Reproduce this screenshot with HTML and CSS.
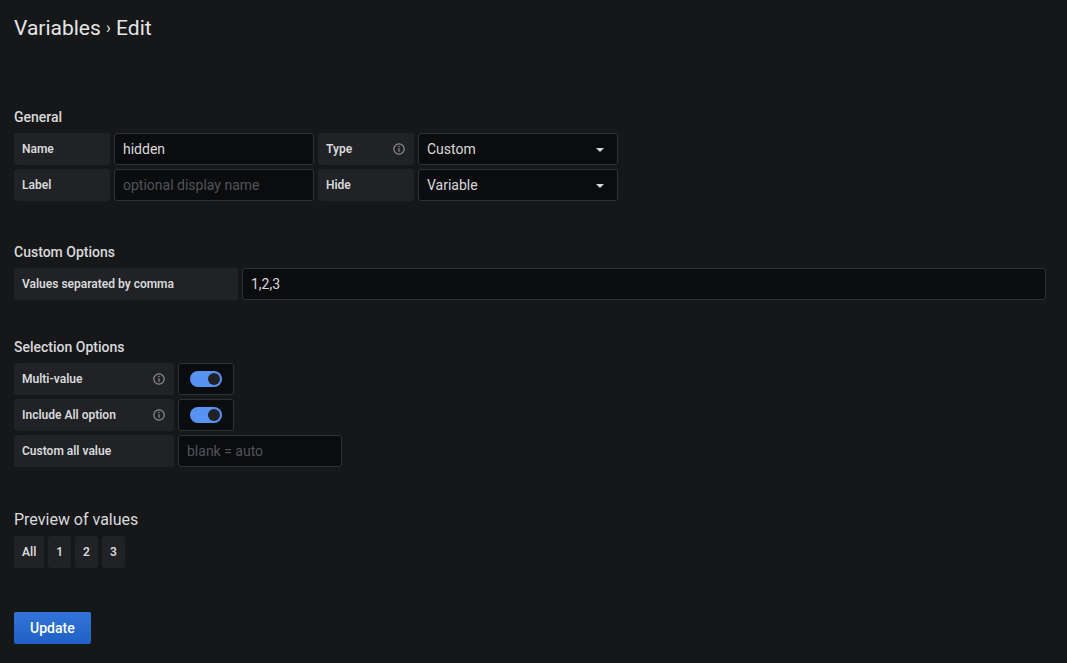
FILE: index.html
```html
<!DOCTYPE html>
<html>
<head>
<meta charset="utf-8">
<link rel="stylesheet" href="styles.css">
</head>
<body>
<div class="page">
  <h1 class="title">Variables <span class="sep">›</span> Edit</h1>

  <h5 class="heading h-general">General</h5>
  <div class="rows">
    <div class="row">
      <div class="label w96">Name</div>
      <div class="input w200">hidden</div>
      <div class="label w96 has-icon">Type
        <svg class="info" viewBox="0 0 12 12" width="12" height="12"><circle cx="6" cy="6" r="5.2" fill="none" stroke="currentColor" stroke-width="1.2"/><rect x="5.4" y="5.2" width="1.2" height="3.6" fill="currentColor"/><circle cx="6" cy="3.6" r="0.75" fill="currentColor"/></svg>
      </div>
      <div class="input w200 select">Custom<span class="caret"></span></div>
    </div>
    <div class="row">
      <div class="label w96">Label</div>
      <div class="input w200 placeholder">optional display name</div>
      <div class="label w96">Hide</div>
      <div class="input w200 select">Variable<span class="caret"></span></div>
    </div>
  </div>

  <h5 class="heading h-custom">Custom Options</h5>
  <div class="rows">
    <div class="row">
      <div class="label w224">Values separated by comma</div>
      <div class="input wide">1,2,3</div>
    </div>
  </div>

  <h5 class="heading h-sel">Selection Options</h5>
  <div class="rows">
    <div class="row">
      <div class="label w160 has-icon">Multi-value
        <svg class="info" viewBox="0 0 12 12" width="12" height="12"><circle cx="6" cy="6" r="5.2" fill="none" stroke="currentColor" stroke-width="1.2"/><rect x="5.4" y="5.2" width="1.2" height="3.6" fill="currentColor"/><circle cx="6" cy="3.6" r="0.75" fill="currentColor"/></svg>
      </div>
      <div class="switchbox"><span class="track"><span class="knob"></span></span></div>
    </div>
    <div class="row">
      <div class="label w160 has-icon">Include All option
        <svg class="info" viewBox="0 0 12 12" width="12" height="12"><circle cx="6" cy="6" r="5.2" fill="none" stroke="currentColor" stroke-width="1.2"/><rect x="5.4" y="5.2" width="1.2" height="3.6" fill="currentColor"/><circle cx="6" cy="3.6" r="0.75" fill="currentColor"/></svg>
      </div>
      <div class="switchbox"><span class="track"><span class="knob"></span></span></div>
    </div>
    <div class="row">
      <div class="label w160">Custom all value</div>
      <div class="input w164 placeholder">blank = auto</div>
    </div>
  </div>

  <h4 class="heading h-preview">Preview of values</h4>
  <div class="chips">
    <span class="chip">All</span>
    <span class="chip">1</span>
    <span class="chip">2</span>
    <span class="chip">3</span>
  </div>

  <button class="btn">Update</button>
</div>
</body>
</html>
```

FILE: styles.css
```css
html, body {
  margin: 0;
  padding: 0;
  background: #161719;
  height: 100%;
}
body {
  font-family: Roboto, "Liberation Sans", Arial, sans-serif;
  color: #d8d9da;
  font-size: 14px;
}
.page {
  padding: 12px 21px 0 14px;
}
.title {
  margin: 0;
  font-size: 21px;
  font-weight: 400;
  line-height: 32px;
  color: #e4e5e6;
}
.title .sep {
  font-size: 16px;
  position: relative;
  top: -2px;
}
.heading {
  margin: 0 0 6px 0;
  font-size: 14px;
  font-weight: 500;
  line-height: 20px;
  color: #d8d9da;
}
.h-general { margin-top: 61px; }
.h-custom { margin-top: 41px; }
.h-sel { margin-top: 37px; }
.h-preview {
  margin-top: 43px;
  font-size: 16px;
  font-weight: 400;
}
.rows {
  display: flex;
  flex-direction: column;
  gap: 4px;
}
.row {
  display: flex;
  gap: 4px;
  height: 32px;
}
.label {
  box-sizing: border-box;
  background: #202226;
  border-radius: 3px;
  height: 32px;
  padding: 0 8px;
  display: flex;
  align-items: center;
  font-size: 12px;
  font-weight: 600;
  color: #d8d9da;
  flex: none;
}
.has-icon {
  justify-content: space-between;
  padding-right: 9px;
}
.info { color: #8e8e8e; display: block; }
.w96 { width: 96px; }
.w160 { width: 160px; }
.w224 { width: 224px; }
.input {
  box-sizing: border-box;
  height: 32px;
  background: #0b0c0e;
  border: 1px solid #2c3235;
  border-radius: 3px;
  padding: 0 8px;
  display: flex;
  align-items: center;
  font-size: 14px;
  color: #d8d9da;
  flex: none;
}
.w200 { width: 200px; }
.w164 { width: 164px; }
.wide { flex: 1 1 auto; }
.placeholder { color: #4f545b; }
.select {
  justify-content: space-between;
  padding-right: 13px;
}
.caret {
  width: 0;
  height: 0;
  border-left: 4px solid transparent;
  border-right: 4px solid transparent;
  border-top: 4px solid #d8d9da;
  margin-top: 1px;
}
.switchbox {
  box-sizing: border-box;
  width: 56px;
  height: 32px;
  background: #0b0c0e;
  border: 1px solid #2c3235;
  border-radius: 3px;
  display: flex;
  align-items: center;
  justify-content: center;
}
.track {
  width: 32px;
  height: 16px;
  border-radius: 8px;
  background: #5794f2;
  display: flex;
  align-items: center;
  justify-content: flex-end;
  padding: 0 2px;
  box-sizing: border-box;
}
.knob {
  width: 12px;
  height: 12px;
  border-radius: 50%;
  background: #202226;
}
.chips {
  display: flex;
  gap: 4px;
}
.chip {
  box-sizing: border-box;
  height: 32px;
  padding: 0 8px;
  background: #202226;
  border-radius: 3px;
  display: flex;
  align-items: center;
  font-size: 12px;
  font-weight: 600;
  color: #d8d9da;
}
.btn {
  margin-top: 44px;
  height: 32px;
  padding: 0 16px;
  border: none;
  border-radius: 2px;
  background: linear-gradient(#3274d9, #1f60c4);
  color: #fff;
  font-family: Roboto, "Liberation Sans", Arial, sans-serif;
  font-size: 14px;
  font-weight: 500;
  display: block;
}
```
